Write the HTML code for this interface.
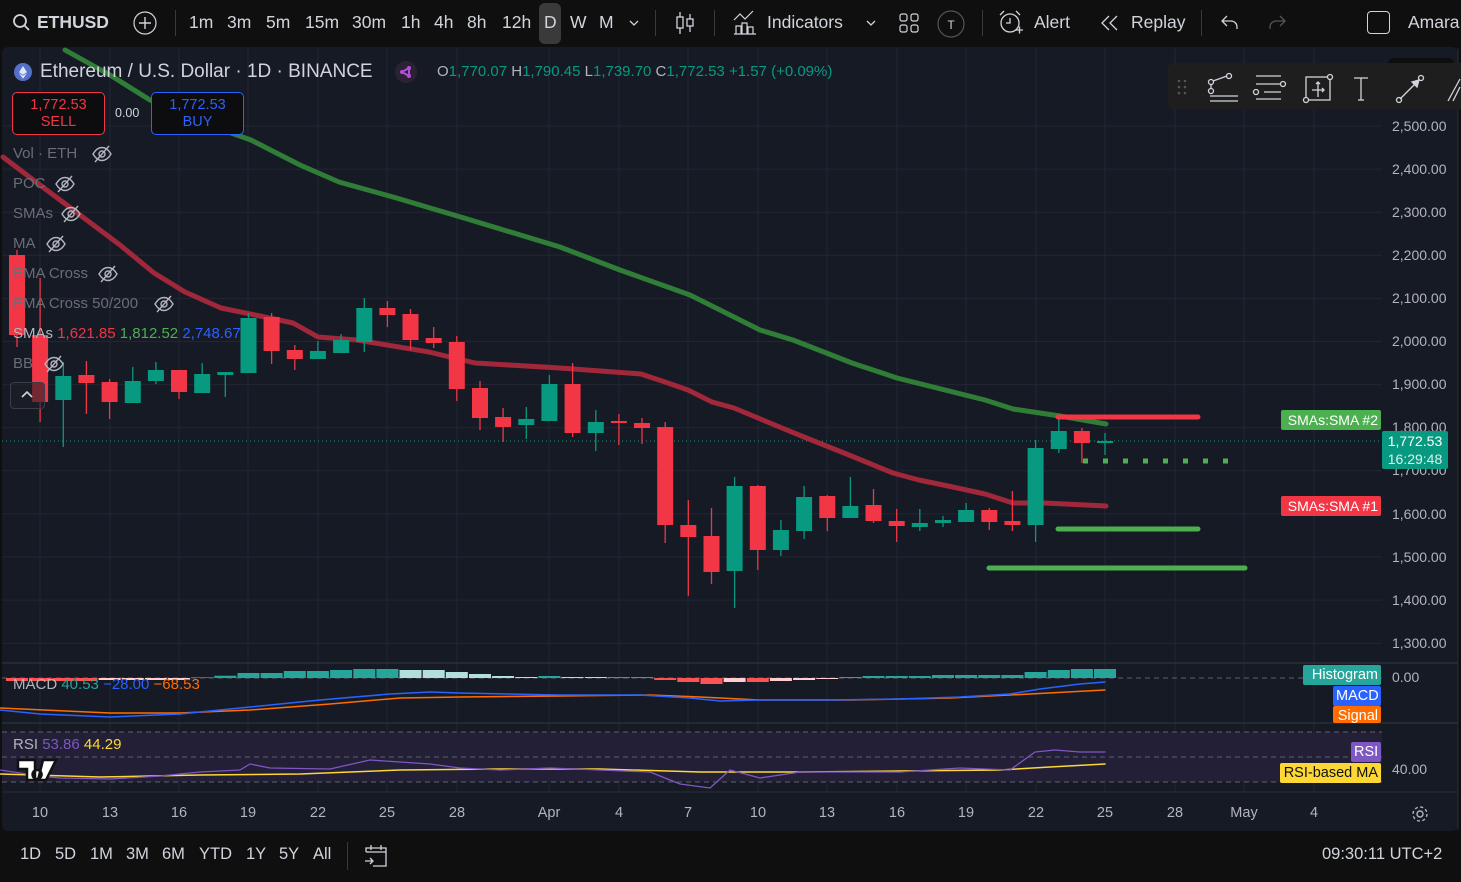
<!DOCTYPE html>
<html><head><meta charset="utf-8">
<style>
*{margin:0;padding:0;box-sizing:border-box}
body{width:1461px;height:882px;background:#0f0f0f;overflow:hidden;position:relative;font-family:"Liberation Sans",sans-serif;color:#d1d4dc}
.a{position:absolute;white-space:nowrap}
.tb{font-size:17.5px;color:#d1d4dc;top:12px}
.leg{font-size:15px;color:#6a6d78}
.ax{font-size:14px;color:#b2b5be;left:1392px}
.tl{font-size:14.5px;color:#b2b5be;top:805px;transform:translateX(-50%)}
.bb{font-size:16.5px;color:#d1d4dc;top:845px}
.lab{font-size:14px;color:#fff;padding:0 3px;line-height:20px;height:20px;border-radius:2px;text-align:right}
.eye{position:absolute;width:22px;height:18px}
</style></head><body>
<!-- top bar -->
<svg class="a" style="left:12px;top:13px" width="20" height="20" viewBox="0 0 20 20"><circle cx="8" cy="8" r="6" fill="none" stroke="#d1d4dc" stroke-width="1.8"/><path d="M12.5 12.5L17 17" stroke="#d1d4dc" stroke-width="1.8"/></svg>
<div class="a tb" style="left:37px;font-weight:bold">ETHUSD</div>
<svg class="a" style="left:133px;top:11px" width="24" height="24"><circle cx="12" cy="12" r="11" fill="none" stroke="#d1d4dc" stroke-width="1.2"/><path d="M12 6v12M6 12h12" stroke="#d1d4dc" stroke-width="1.4"/></svg>
<div class="a" style="left:175px;top:10px;width:1px;height:26px;background:#3a3a3a"></div>
<div class="a tb" style="left:189px">1m</div><div class="a tb" style="left:227px">3m</div><div class="a tb" style="left:266px">5m</div><div class="a tb" style="left:305px">15m</div><div class="a tb" style="left:352px">30m</div><div class="a tb" style="left:401px">1h</div><div class="a tb" style="left:434px">4h</div><div class="a tb" style="left:467px">8h</div><div class="a tb" style="left:502px">12h</div>
<div class="a" style="left:539px;top:3px;width:22px;height:41px;background:#3a3a3a;border-radius:6px"></div>
<div class="a tb" style="left:544px">D</div><div class="a tb" style="left:570px">W</div><div class="a tb" style="left:599px">M</div>
<svg class="a" style="left:628px;top:18px" width="12" height="10"><path d="M2 3l4 4 4-4" fill="none" stroke="#d1d4dc" stroke-width="1.3"/></svg>
<div class="a" style="left:655px;top:10px;width:1px;height:26px;background:#3a3a3a"></div>
<svg class="a" style="left:674px;top:10px" width="22" height="26"><path d="M6 2v22M16 4v18" stroke="#d1d4dc" stroke-width="1.3"/><rect x="3" y="7" width="6" height="11" fill="#0f0f0f" stroke="#d1d4dc" stroke-width="1.3"/><rect x="13" y="9" width="6" height="7" fill="#0f0f0f" stroke="#d1d4dc" stroke-width="1.3"/></svg>
<div class="a" style="left:714px;top:10px;width:1px;height:26px;background:#3a3a3a"></div>
<svg class="a" style="left:732px;top:10px" width="26" height="26"><path d="M2 10l6-6 5 5 8-8" fill="none" stroke="#d1d4dc" stroke-width="1.2"/><path d="M2 24h22M4 24v-8h5v8M10 24v-11h5v11M16 24v-7h5v7" fill="none" stroke="#d1d4dc" stroke-width="1.2"/></svg>
<div class="a tb" style="left:767px">Indicators</div>
<svg class="a" style="left:865px;top:18px" width="12" height="10"><path d="M2 3l4 4 4-4" fill="none" stroke="#d1d4dc" stroke-width="1.3"/></svg>
<svg class="a" style="left:898px;top:12px" width="22" height="22"><rect x="2" y="2" width="7" height="7" rx="2" fill="none" stroke="#d1d4dc" stroke-width="1.2"/><rect x="13" y="2" width="7" height="7" rx="2" fill="none" stroke="#d1d4dc" stroke-width="1.2"/><rect x="2" y="13" width="7" height="7" rx="2" fill="none" stroke="#d1d4dc" stroke-width="1.2"/><rect x="13" y="13" width="7" height="7" rx="2" fill="none" stroke="#d1d4dc" stroke-width="1.2"/></svg>
<svg class="a" style="left:936px;top:9px" width="30" height="30"><circle cx="15" cy="15" r="13" fill="none" stroke="#555" stroke-width="1.2"/><text x="15" y="20" font-size="12" fill="#d1d4dc" text-anchor="middle" font-family="Liberation Sans">T</text></svg>
<div class="a" style="left:982px;top:10px;width:1px;height:26px;background:#3a3a3a"></div>
<svg class="a" style="left:997px;top:9px" width="28" height="28"><circle cx="13" cy="14" r="9" fill="none" stroke="#d1d4dc" stroke-width="1.3"/><path d="M13 9v5h-4M3 6l4-4M23 6l-4-4M19 21h7M22.5 17.5v7" fill="none" stroke="#d1d4dc" stroke-width="1.3"/></svg>
<div class="a tb" style="left:1034px">Alert</div>
<svg class="a" style="left:1099px;top:14px" width="22" height="18"><path d="M10 2L3 9l7 7M18 2l-7 7 7 7" fill="none" stroke="#d1d4dc" stroke-width="1.3"/></svg>
<div class="a tb" style="left:1131px">Replay</div>
<div class="a" style="left:1201px;top:10px;width:1px;height:26px;background:#3a3a3a"></div>
<svg class="a" style="left:1219px;top:13px" width="22" height="20"><path d="M8 3L3 8l5 5M3 8h9a6 6 0 0 1 6 6v2" fill="none" stroke="#d1d4dc" stroke-width="1.3"/></svg>
<svg class="a" style="left:1266px;top:13px" width="22" height="20"><path d="M14 3l5 5-5 5M19 8h-9a6 6 0 0 0-6 6v2" fill="none" stroke="#555" stroke-width="1.3"/></svg>
<div class="a" style="left:1367px;top:11px;width:23px;height:23px;border:1.6px solid #d1d4dc;border-radius:4px"></div>
<div class="a tb" style="left:1408px">Amara</div>

<!-- chart panel -->
<div class="a" style="left:2px;top:47px;width:1456px;height:784px;background:#161a25;border-radius:6px"></div>
<svg class="a" style="left:0;top:0" width="1461" height="882" id="ch"></svg>

<!-- header legend -->
<svg class="a" style="left:14px;top:63px" width="18" height="18"><circle cx="9" cy="9" r="9" fill="#5570c8"/><path d="M9 3l-4 6.3 4 2.4 4-2.4zM5 10.2l4 5.5 4-5.5-4 2.4z" fill="#dfe6ff"/></svg>
<div class="a" style="left:40px;top:61px;font-size:19px;color:#d1d4dc">Ethereum / U.S. Dollar · 1D · BINANCE</div>
<svg class="a" style="left:395px;top:61px" width="22" height="22"><circle cx="11" cy="11" r="11" fill="#2a2233"/><path d="M7 11l7-4v8z" fill="none" stroke="#b14fd8" stroke-width="2"/><circle cx="7" cy="11" r="2" fill="#b14fd8"/><circle cx="14" cy="7" r="2" fill="#b14fd8"/><circle cx="14" cy="15" r="2" fill="#b14fd8"/></svg>
<div class="a" style="left:437px;top:63px;font-size:15px;color:#089981"><span style="color:#b2b5be">O</span>1,770.07 <span style="color:#b2b5be">H</span>1,790.45 <span style="color:#b2b5be">L</span>1,739.70 <span style="color:#b2b5be">C</span>1,772.53 +1.57 (+0.09%)</div>
<div class="a" style="left:12px;top:92px;width:93px;height:43px;border:1px solid #f23645;border-radius:5px;background:#0d0d0f;text-align:center;color:#f23645;font-size:14.5px;line-height:17px;padding-top:4px">1,772.53<br>SELL</div>
<div class="a" style="left:115px;top:106px;font-size:12.5px;color:#d1d4dc">0.00</div>
<div class="a" style="left:151px;top:92px;width:93px;height:43px;border:1px solid #2962ff;border-radius:5px;background:#0d0d0f;text-align:center;color:#2962ff;font-size:14.5px;line-height:17px;padding-top:4px">1,772.53<br>BUY</div>

<div class="a leg" style="left:13px;top:145px">Vol · ETH</div>
<div class="a leg" style="left:13px;top:175px">POC</div>
<div class="a leg" style="left:13px;top:205px">SMAs</div>
<div class="a leg" style="left:13px;top:235px">MA</div>
<div class="a leg" style="left:13px;top:265px">EMA Cross</div>
<div class="a leg" style="left:13px;top:295px">EMA Cross 50/200</div>
<div class="a" style="left:13px;top:325px;font-size:15px;color:#b2b5be">SMAs <span style="color:#f23645">1,621.85</span> <span style="color:#4caf50">1,812.52</span> <span style="color:#2962ff">2,748.67</span></div>
<div class="a leg" style="left:13px;top:355px">BB</div>
<svg width="0" height="0" style="position:absolute"><defs><g id="es" fill="none" stroke="#b2b5be" stroke-width="1.4"><path d="M2 9c3-5 6-6.5 9-6.5s6 1.5 9 6.5c-3 5-6 6.5-9 6.5S5 14 2 9z"/><circle cx="11" cy="9" r="3"/><path d="M4 17L18 1"/></g></defs></svg>
<svg class="eye" style="left:91px;top:145px"><use href="#es"/></svg>
<svg class="eye" style="left:54px;top:175px"><use href="#es"/></svg>
<svg class="eye" style="left:60px;top:205px"><use href="#es"/></svg>
<svg class="eye" style="left:45px;top:235px"><use href="#es"/></svg>
<svg class="eye" style="left:97px;top:265px"><use href="#es"/></svg>
<svg class="eye" style="left:153px;top:295px"><use href="#es"/></svg>
<svg class="eye" style="left:43px;top:355px"><use href="#es"/></svg>
<div class="a" style="left:10px;top:382px;width:35px;height:27px;border:1px solid #3a3d47;border-radius:4px;background:rgba(30,32,40,.6)"></div>
<svg class="a" style="left:20px;top:389px" width="14" height="12"><path d="M2 8l5-5 5 5" fill="none" stroke="#d1d4dc" stroke-width="1.6"/></svg>

<!-- drawing toolbar -->
<div class="a" style="left:1388px;top:58px;width:66px;height:20px;background:#0e0e0e;border-radius:5px"></div>
<div class="a" style="left:1168px;top:63px;width:293px;height:46px;background:#1e1e1e;border-radius:6px 0 0 6px"></div>
<svg class="a" style="left:1168px;top:63px" width="293" height="46" fill="none" stroke="#d1d4dc" stroke-width="1.3">
<g fill="#555" stroke="none"><circle cx="11" cy="18" r="1.3"/><circle cx="17" cy="18" r="1.3"/><circle cx="11" cy="24" r="1.3"/><circle cx="17" cy="24" r="1.3"/><circle cx="11" cy="30" r="1.3"/><circle cx="17" cy="30" r="1.3"/></g>
<circle cx="43" cy="19" r="2.5"/><circle cx="61" cy="13" r="2.5"/><circle cx="43" cy="28" r="2.5"/><path d="M45 18l14-5M43 21v5M42 33h28M42 38h28"/>
<path d="M88 13h25M88 21h25M96 29h17M88 36h25"/><circle cx="115" cy="21" r="2.5"/><circle cx="88" cy="29" r="2.5" />
<rect x="138" y="14" width="24" height="23"/><path d="M150 19v15M144 27h12M148 21l2-2 2 2M154 25l2 2-2 2"/><circle cx="162" cy="14" r="2.5" fill="#1e1e1e"/><circle cx="138" cy="37" r="2.5" fill="#1e1e1e"/>
<path d="M186 15h14M193 15v22M190 37h6"/>
<path d="M232 36l19-19"/><path d="M244 19l7-2-2 7z" fill="#d1d4dc"/><circle cx="231" cy="37" r="2.5"/><circle cx="253" cy="15" r="2.5"/>
<path d="M280 38l12-22M285 38l7-14"/>
</svg>

<!-- right axis labels -->
<div class="a ax" style="top:118px">2,500.00</div>
<div class="a ax" style="top:161px">2,400.00</div>
<div class="a ax" style="top:204px">2,300.00</div>
<div class="a ax" style="top:247px">2,200.00</div>
<div class="a ax" style="top:290px">2,100.00</div>
<div class="a ax" style="top:333px">2,000.00</div>
<div class="a ax" style="top:376px">1,900.00</div>
<div class="a ax" style="top:419px">1,800.00</div>
<div class="a ax" style="top:462px">1,700.00</div>
<div class="a ax" style="top:506px">1,600.00</div>
<div class="a ax" style="top:549px">1,500.00</div>
<div class="a ax" style="top:592px">1,400.00</div>
<div class="a ax" style="top:635px">1,300.00</div>
<div class="a ax" style="top:669px">0.00</div>
<div class="a ax" style="top:761px">40.00</div>
<div class="a" style="left:1382px;top:431px;width:66px;height:38px;background:#089981;border-radius:2px;color:#fff;font-size:14px;line-height:18px;text-align:center;padding-top:1px">1,772.53<br><span style="color:#d9f2ee">16:29:48</span></div>
<div class="a lab" style="left:1281px;top:410px;width:100px;background:#4caf50">SMAs:SMA #2</div>
<div class="a lab" style="left:1281px;top:496px;width:100px;background:#f23645">SMAs:SMA #1</div>
<div class="a lab" style="left:1303px;top:665px;width:78px;background:#26a69a;font-size:14.5px">Histogram</div>
<div class="a lab" style="left:1333px;top:686px;width:48px;background:#2962ff;font-size:14.5px">MACD</div>
<div class="a lab" style="left:1333px;top:706px;width:48px;height:17px;overflow:hidden;background:#ff6d00;font-size:14.5px">Signal</div>
<div class="a lab" style="left:1351px;top:742px;width:30px;background:#7e57c2;font-size:14.5px">RSI</div>
<div class="a lab" style="left:1280px;top:763px;width:101px;background:#fdd835;color:#111;font-size:14.5px">RSI-based MA</div>

<div class="a" style="left:13px;top:676px;font-size:15px;color:#b2b5be">MACD <span style="color:#26a69a">40.53</span> <span style="color:#2962ff">−28.00</span> <span style="color:#ff6d00">−68.53</span></div>
<div class="a" style="left:13px;top:736px;font-size:15px;color:#b2b5be">RSI <span style="color:#7e57c2">53.86</span> <span style="color:#fdd835">44.29</span></div>
<svg class="a" style="left:15px;top:757px" width="44" height="28"><path d="M3 3h17v20h-8V12H3zM22 13a4.5 4.5 0 1 0 0.1 0zM28 3h13l-10 20h-8z" fill="#fff" stroke="#111" stroke-width="2.5"/></svg>

<!-- time axis -->
<div class="a tl" style="left:40px">10</div><div class="a tl" style="left:110px">13</div><div class="a tl" style="left:179px">16</div><div class="a tl" style="left:248px">19</div><div class="a tl" style="left:318px">22</div><div class="a tl" style="left:387px">25</div><div class="a tl" style="left:457px">28</div><div class="a tl" style="left:549px">Apr</div><div class="a tl" style="left:619px">4</div><div class="a tl" style="left:688px">7</div><div class="a tl" style="left:758px">10</div><div class="a tl" style="left:827px">13</div><div class="a tl" style="left:897px">16</div><div class="a tl" style="left:966px">19</div><div class="a tl" style="left:1036px">22</div><div class="a tl" style="left:1105px">25</div><div class="a tl" style="left:1175px">28</div><div class="a tl" style="left:1244px">May</div><div class="a tl" style="left:1314px">4</div>
<svg class="a" style="left:1410px;top:804px" width="20" height="20"><circle cx="10" cy="10" r="3" fill="none" stroke="#b2b5be" stroke-width="1.4"/><circle cx="10" cy="10" r="7" fill="none" stroke="#b2b5be" stroke-width="1.4" stroke-dasharray="3 2.5"/></svg>

<!-- bottom bar -->
<div class="a bb" style="left:20px">1D</div><div class="a bb" style="left:55px">5D</div><div class="a bb" style="left:90px">1M</div><div class="a bb" style="left:126px">3M</div><div class="a bb" style="left:162px">6M</div><div class="a bb" style="left:199px">YTD</div><div class="a bb" style="left:246px">1Y</div><div class="a bb" style="left:279px">5Y</div><div class="a bb" style="left:313px">All</div>
<div class="a" style="left:347px;top:842px;width:1px;height:28px;background:#3a3a3a"></div>
<svg class="a" style="left:363px;top:843px" width="26" height="26" fill="none" stroke="#d1d4dc" stroke-width="1.3"><path d="M3 9V5h20v18H10M3 9h20M8 2v5M18 2v5M2 18h8M7 15l3 3-3 3"/></svg>
<div class="a bb" style="left:1322px">09:30:11 UTC+2</div>

<script>
var s='';
function L(x1,y1,x2,y2,c,w,d,cap){s+='<line x1="'+x1+'" y1="'+y1+'" x2="'+x2+'" y2="'+y2+'" stroke="'+c+'" stroke-width="'+(w||1)+'"'+(d?' stroke-dasharray="'+d+'"':'')+(cap?' stroke-linecap="round"':'')+'/>';}
function P(pts,c,w){s+='<polyline points="'+pts+'" fill="none" stroke="'+c+'" stroke-width="'+w+'" stroke-linejoin="round" stroke-linecap="round"/>';}
[40,110,179,248,318,387,457,549,619,688,758,827,897,966,1036,1105,1175,1244,1314].forEach(function(x){L(x,48,x,792,'#232632');});
for(var y=126;y<=650;y+=43.1)L(2,y,1382,y,'#232632');
s+='<rect x="2" y="732" width="1380" height="50" fill="#221f36"/>';
L(2,663,1458,663,'#2a2e39',1.5);L(2,723,1458,723,'#2a2e39',1.5);L(2,792,1458,792,'#2a2e39',1);L(1458,48,1458,830,'#2a2e39',1);
L(2,732,1382,732,'#5d606b',1,'5 4');L(2,757,1382,757,'#5d606b',1,'5 4');L(2,782,1382,782,'#5d606b',1,'5 4');L(2,678,1382,678,'#5d606b',1,'5 4');
L(2,441,1382,441,'#089981',1,'1 3');
var C=[[255,335,250,347,0],[335,402,278,422,0],[376,400,362,447,1],[375,383,361,414,0],[382,402,379,419,0],[381,403,367,403,1],[370,381,362,384,1],[370,392,370,399,0],[374,393,363,393,1],[372,375,372,397,1],[318,373,313,373,1],[317,351,313,364,0],[350,359,345,370,0],[351,359,341,359,1],[340,353,334,353,1],[308,342,298,352,1],[308,315,301,327,0],[314,340,309,350,0],[338,343,327,348,0],[342,389,336,401,0],[388,418,381,430,0],[417,427,408,442,0],[419,425,407,439,1],[384,421,375,421,1],
[384,433,363,437,0],[422,433,410,451,1],[421,423,414,445,0],[423,428,418,444,0],[427,525,422,543,0],[525,537,500,596,0],[536,572,508,584,0],[486,571,477,608,1],[486,550,485,570,0],[530,550,520,556,1],[497,531,486,539,1],[496,518,495,531,0],[506,518,477,518,1],[505,521,489,523,0],[521,526,509,542,0],[523,527,509,531,1],[520,523,516,527,1],[510,522,503,522,1],[510,522,508,530,0],[521,525,491,531,0],[448,525,440,542,1],[431,449,415,453,1],[431,443,428,463,0],[441,443,433,455,1]];
P('3,157 40,185 80,215 120,245 154,273 185,292 221,308 260,316 293,323 318,337 357,340 429,352 475,363 560,368 641,374 665,382 688,390 712,402 734,408 782,428 804,437 849,455 893,473 919,480 948,486 985,494 1013,503 1045,503 1106,506','#a0283a',5);
P('65,50 110,75 150,100 200,122 251,140 300,165 339,182 393,197 464,218 560,247 620,270 690,295 760,330 793,340 852,363 897,378 985,400 1013,409 1060,416 1106,424','#2f7d37',5);
C.forEach(function(c,i){var x=(17+23.15*i).toFixed(1),col=c[4]?'#089981':'#f23645';L(x,c[2],x,c[3],col,1.3);s+='<rect x="'+(x-8)+'" y="'+c[0]+'" width="16" height="'+Math.max(2,c[1]-c[0])+'" fill="'+col+'"/>';});
L(1058,417,1198,417,'#f23645',5,0,1);
L(1083,461,1240,461,'#4caf50',5,'5 15');
L(1058,529,1198,529,'#4caf50',5,0,1);
L(989,568,1245,568,'#4caf50',5,0,1);
var H=[-3,-3,-3,-3,-2,-2,-2,-2,0.7,2.3,5,5,7,7,8,9,9,8,8,6,4,2,1,2,1,1,1,1,-2,-4,-6,-4,-4,-3,-2,-1,1,2,2,2,3,3,3,3,6,8,9,9];
var HC=['#ff5252','#ff5252','#ff5252','#ff5252','#ffcdd2','#ffcdd2','#ffcdd2','#ffcdd2'];
H.forEach(function(h,i){var x=17+23.15*i-11,c;
 if(i<8)c=HC[i];else if(i>=17&&i<=22||i==24||i==25)c='#b2dfdb';else if(i==28||i==29||i==30||i==32)c='#ff5252';else if(i>=31&&i<=35)c='#ffcdd2';else c='#26a69a';
 var y=h>0?678-h:678;s+='<rect x="'+x.toFixed(1)+'" y="'+y+'" width="22" height="'+Math.abs(h)+'" fill="'+c+'"/>';});
P('0,708 110,713 180,713 250,710 330,704 400,698 460,697 560,696 650,695 700,697 760,700 850,700 950,698 1030,694 1105,690','#ff6d00',1.5);
P('0,710 40,714 110,717 180,714 240,708 320,700 390,694 430,692 460,693 560,695 640,695 690,698 720,701 760,700 830,700 900,699 960,697 1010,694 1040,689 1080,684 1105,682','#2962ff',1.5);
P('0,774 100,777 200,775 300,774 400,770 500,769 600,769 700,772 800,772 900,771 1000,770 1050,767 1105,764','#fdd835',1.5);
P('0,770 40,776 60,778 110,779 160,776 200,772 240,770 250,764 270,768 330,769 370,760 400,762 430,764 460,768 500,770 550,768 600,770 650,772 680,784 710,788 730,770 760,778 800,772 850,772 900,772 960,768 1010,770 1035,752 1055,750 1080,752 1105,752','#7e57c2',1.3);
document.getElementById('ch').innerHTML=s;
</script>
</body></html>
